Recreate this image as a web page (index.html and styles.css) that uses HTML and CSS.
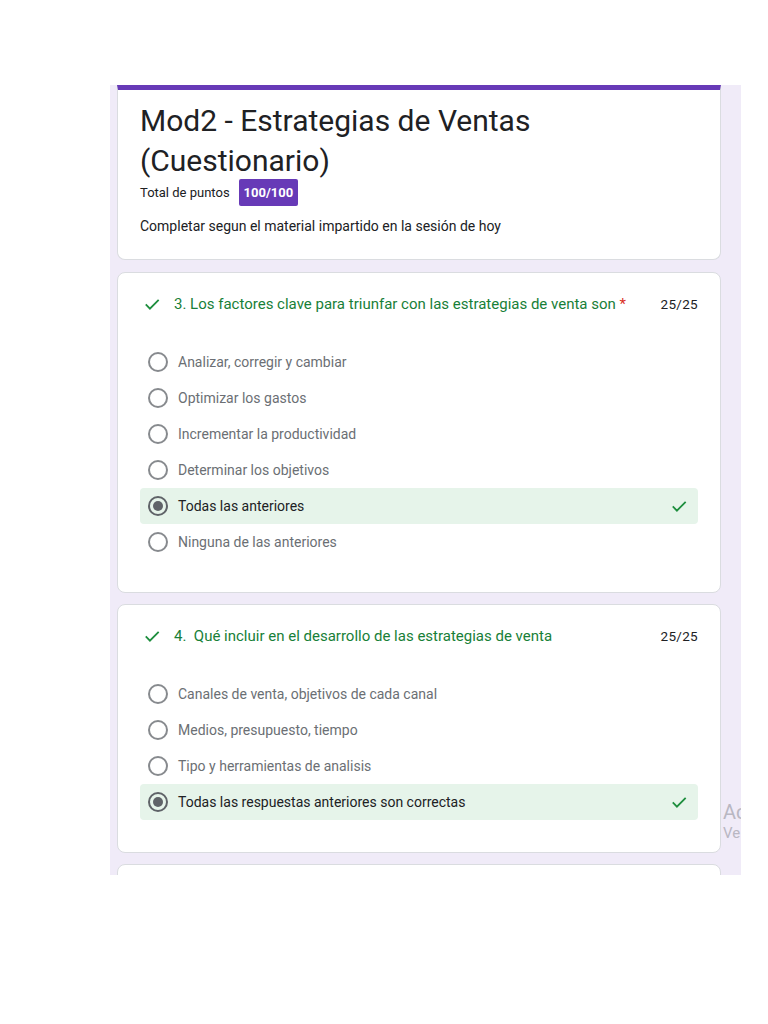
FILE: index.html
```html
<!DOCTYPE html>
<html lang="es">
<head>
<meta charset="utf-8">
<title>Mod2 - Estrategias de Ventas</title>
<link rel="stylesheet" href="styles.css">
</head>
<body>
<div class="frame">
  <div class="col">
    <section class="card header-card">
      <h1 class="title">Mod2 - Estrategias de Ventas (Cuestionario)</h1>
      <div class="points">
        <span class="points-label">Total de puntos</span>
        <span class="badge">100/100</span>
      </div>
      <p class="desc">Completar segun el material impartido en la sesión de hoy</p>
    </section>

    <section class="card q-card">
      <div class="q-head">
        <svg class="q-check" viewBox="0 0 24 24" width="20" height="20"><path d="M4.5 12.5l5 5L20 7" fill="none" stroke="#1e8e3e" stroke-width="2.2"/></svg>
        <span class="q-text">3. Los factores clave para triunfar con las estrategias de venta son <span class="req">*</span></span>
        <span class="q-score">25/25</span>
      </div>
      <ul class="opts">
        <li class="opt"><span class="radio"></span><span class="opt-text">Analizar, corregir y cambiar</span></li>
        <li class="opt"><span class="radio"></span><span class="opt-text">Optimizar los gastos</span></li>
        <li class="opt"><span class="radio"></span><span class="opt-text">Incrementar la productividad</span></li>
        <li class="opt"><span class="radio"></span><span class="opt-text">Determinar los objetivos</span></li>
        <li class="opt correct"><span class="radio on"></span><span class="opt-text">Todas las anteriores</span>
          <svg class="opt-check" viewBox="0 0 24 24" width="20" height="20"><path d="M4.5 12.5l5 5L20 7" fill="none" stroke="#1e8e3e" stroke-width="2.2"/></svg></li>
        <li class="opt"><span class="radio"></span><span class="opt-text">Ninguna de las anteriores</span></li>
      </ul>
    </section>

    <section class="card q-card">
      <div class="q-head">
        <svg class="q-check" viewBox="0 0 24 24" width="20" height="20"><path d="M4.5 12.5l5 5L20 7" fill="none" stroke="#1e8e3e" stroke-width="2.2"/></svg>
        <span class="q-text">4.&nbsp; Qué incluir en el desarrollo de las estrategias de venta</span>
        <span class="q-score">25/25</span>
      </div>
      <ul class="opts">
        <li class="opt"><span class="radio"></span><span class="opt-text">Canales de venta, objetivos de cada canal</span></li>
        <li class="opt"><span class="radio"></span><span class="opt-text">Medios, presupuesto, tiempo</span></li>
        <li class="opt"><span class="radio"></span><span class="opt-text">Tipo y herramientas de analisis</span></li>
        <li class="opt correct"><span class="radio on"></span><span class="opt-text">Todas las respuestas anteriores son correctas</span>
          <svg class="opt-check" viewBox="0 0 24 24" width="20" height="20"><path d="M4.5 12.5l5 5L20 7" fill="none" stroke="#1e8e3e" stroke-width="2.2"/></svg></li>
      </ul>
    </section>

    <section class="card q-card stub"></section>
  </div>
  <div class="watermark">
    <span class="wm1">Ac</span>
    <span class="wm2">Ve</span>
  </div>
</div>
</body>
</html>
```

FILE: styles.css
```css
* { box-sizing: border-box; }
html, body { margin: 0; padding: 0; background: #ffffff; }
body { font-family: Roboto, "Liberation Sans", Arial, sans-serif; color: #202124; }

.frame {
  position: relative;
  margin: 85px 0 0 110px;
  width: 631px;
  height: 790px;
  background: #f0ebf8;
  overflow: hidden;
}
.col {
  margin-left: 7px;
  width: 604px;
  display: flex;
  flex-direction: column;
  gap: 11px;
}
.card {
  background: #ffffff;
  border: 1px solid #dadce0;
  border-radius: 8px;
  padding: 0 22px;
}
.header-card {
  border-top: 5px solid #673ab7;
  border-radius: 0 0 8px 8px;
  padding-top: 11px;
  padding-bottom: 23px;
  margin-bottom: 1px;
}
.title {
  margin: 0;
  font-size: 30px;
  font-weight: 400;
  line-height: 40px;
  color: #202124;
  width: 440px;
}
.points {
  display: flex;
  align-items: center;
  gap: 9px;
  margin-top: -2px;
  height: 27px;
}
.points-label { font-size: 13px; color: #202124; }
.badge {
  background: #673ab7;
  color: #ffffff;
  font-size: 13px;
  font-weight: 700;
  padding: 0 5px;
  height: 27px;
  line-height: 27px;
  border-radius: 2px;
}
.desc {
  margin: 10px 0 0;
  font-size: 14px;
  line-height: 20px;
  color: #202124;
}

.q-card { padding-top: 19px; padding-bottom: 32px; }
.q-head {
  display: flex;
  align-items: center;
  height: 24px;
}
.q-check { margin-left: 2px; margin-right: 12px; flex: none; }
.q-text {
  flex: 1;
  font-size: 15px;
  color: #188038;
  white-space: nowrap;
}
.req { color: #d93025; }
.q-score { font-size: 13.5px; color: #202124; letter-spacing: 0.3px; }

.opts {
  list-style: none;
  margin: 28px 0 0;
  padding: 0;
}
.opt {
  display: flex;
  align-items: center;
  height: 36px;
  padding-left: 8px;
  padding-right: 9px;
  border-radius: 4px;
}
.opt.correct { background: #e6f4ea; }
.radio {
  width: 20px;
  height: 20px;
  border: 2px solid #5f6368;
  border-radius: 50%;
  flex: none;
  margin-right: 10px;
  opacity: 0.75;
  position: relative;
}
.radio.on { opacity: 1; }
.radio.on::after {
  content: "";
  position: absolute;
  left: 3px;
  top: 3px;
  width: 10px;
  height: 10px;
  border-radius: 50%;
  background: #5f6368;
}
.opt-text {
  flex: 1;
  font-size: 14px;
  color: #6b6f74;
}
.opt.correct .opt-text { color: #202124; }
.opt-check { flex: none; }

.stub { height: 40px; }

.watermark {
  position: absolute;
  left: 613px;
  top: 717px;
  display: flex;
  flex-direction: column;
  color: #b9b7c2;
  line-height: 1;
}
.wm1 { font-size: 20px; }
.wm2 { font-size: 15px; margin-top: 4px; }
```
